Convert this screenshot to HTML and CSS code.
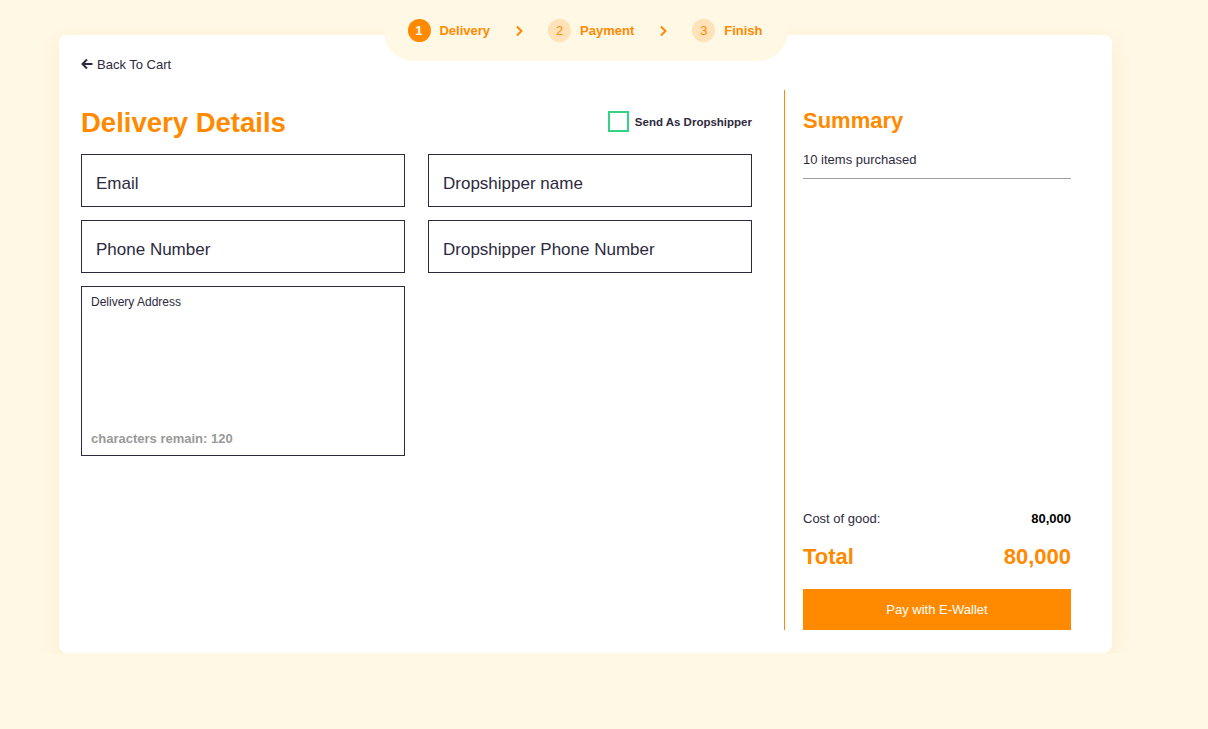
FILE: index.html
```html
<!DOCTYPE html>
<html lang="en">
<head>
<meta charset="utf-8">
<title>Checkout - Delivery</title>
<link rel="stylesheet" href="styles.css">
</head>
<body>
  <div class="card">
    <div class="steps">
      <div class="step active"><span class="num">1</span><span class="label">Delivery</span></div>
      <svg class="chev" width="8" height="12" viewBox="0 0 8 12"><polyline points="2,1.5 6.5,6 2,10.5" fill="none" stroke="#FF8A00" stroke-width="2"/></svg>
      <div class="step"><span class="num">2</span><span class="label">Payment</span></div>
      <svg class="chev" width="8" height="12" viewBox="0 0 8 12"><polyline points="2,1.5 6.5,6 2,10.5" fill="none" stroke="#FF8A00" stroke-width="2"/></svg>
      <div class="step"><span class="num">3</span><span class="label">Finish</span></div>
    </div>

    <a class="back" href="#">
      <svg width="12" height="12" viewBox="0 0 12 12"><path d="M11.5 6H1.5M6 1.5L1.5 6L6 10.5" fill="none" stroke="#2D2A40" stroke-width="2"/></svg>
      Back To Cart
    </a>

    <div class="main">
      <div class="delivery">
        <div class="head">
          <h1>Delivery Details</h1>
          <label class="check"><span class="box"></span>Send As Dropshipper</label>
        </div>
        <div class="form">
          <input type="text" placeholder="Email">
          <input type="text" placeholder="Dropshipper name">
          <input type="text" placeholder="Phone Number">
          <input type="text" placeholder="Dropshipper Phone Number">
          <div class="address">
            <textarea placeholder="Delivery Address"></textarea>
            <div class="remain">characters remain: 120</div>
          </div>
        </div>
      </div>

      <div class="summary">
        <h2>Summary</h2>
        <div class="items">10 items purchased</div>
        <hr>
        <div class="spacer"></div>
        <div class="line"><span>Cost of good:</span><b>80,000</b></div>
        <div class="line total"><span>Total</span><span>80,000</span></div>
        <button class="pay">Pay with E-Wallet</button>
      </div>
    </div>
  </div>
</body>
</html>
```

FILE: styles.css
```css
* {
  margin: 0;
  padding: 0;
  box-sizing: border-box;
}
body {
  font-family: "Liberation Sans", Arial, sans-serif;
  background-color: #FFF8E5;
  color: #2D2A40;
}

.card {
  position: relative;
  width: 1053px;
  margin: 35px 0 0 59px;
  padding: 21px 41px 23px 22px;
  background-color: #fff;
  border-radius: 8px;
  box-shadow: 0 6px 20px rgba(255, 138, 0, 0.12);
}

/* stepper sits over the top edge of the card */
.steps {
  position: absolute;
  top: -35px;
  left: 50%;
  transform: translateX(-50%);
  height: 61px;
  padding: 0 25px 0 24px;
  display: flex;
  align-items: center;
  background-color: #FFF8E5;
  border-radius: 0 0 30px 30px;
}
.step {
  display: flex;
  align-items: center;
  gap: 9px;
  color: #FF8A00;
  font-size: 13px;
  font-weight: bold;
}
.num {
  width: 23px;
  height: 23px;
  border-radius: 50%;
  background-color: rgba(255, 138, 0, 0.2);
  display: flex;
  justify-content: center;
  align-items: center;
  font-size: 13px;
  font-weight: normal;
}
.step.active .num {
  background-color: #FF8A00;
  color: #fff;
  font-weight: bold;
}
.chev {
  margin: 0 25px;
}

.back {
  display: flex;
  align-items: center;
  gap: 4px;
  height: 16px;
  font-size: 13px;
  color: #2D2A40;
  text-decoration: none;
}

.main {
  display: flex;
  margin-top: 18px;
  height: 540px;
}
.delivery {
  width: 671px;
}
.head {
  display: flex;
  justify-content: space-between;
  align-items: center;
  margin-top: 17px;
  height: 32px;
}
h1 {
  font-size: 27.5px;
  line-height: 32px;
  color: #FF8A00;
}
.check {
  display: flex;
  align-items: center;
  gap: 6px;
  font-size: 11.5px;
  font-weight: bold;
  margin-top: -3px;
}
.box {
  width: 21px;
  height: 21px;
  border: 2px solid #33D286;
}

.form {
  display: grid;
  grid-template-columns: 324px 324px;
  column-gap: 23px;
  row-gap: 13px;
  margin-top: 15px;
}
input {
  height: 53px;
  border: 1px solid #2D2A40;
  padding: 6px 14px 0;
  font-family: inherit;
  font-size: 17px;
  color: #2D2A40;
  outline: none;
}
input::placeholder,
textarea::placeholder {
  color: #2D2A40;
  opacity: 1;
}
.address {
  height: 170px;
  border: 1px solid #2D2A40;
  display: flex;
  flex-direction: column;
  padding: 8px 9px 9px;
}
textarea {
  flex: 1;
  border: none;
  resize: none;
  outline: none;
  font-family: inherit;
  font-size: 12px;
  color: #2D2A40;
}
.remain {
  font-size: 13px;
  font-weight: bold;
  color: #999;
}

.summary {
  margin-left: 32px;
  padding-left: 18px;
  border-left: 1px solid #FF8A00;
  width: 287px;
  display: flex;
  flex-direction: column;
}
h2 {
  margin-top: 18px;
  font-size: 22px;
  line-height: 26px;
  color: #FF8A00;
}
.items {
  margin-top: 18px;
  font-size: 13px;
  line-height: 16px;
}
hr {
  margin-top: 10px;
  border: none;
  border-top: 1px solid #9E9E9E;
}
.spacer {
  flex: 1;
}
.line {
  display: flex;
  justify-content: space-between;
  align-items: center;
  font-size: 13px;
  line-height: 16px;
}
.line b {
  color: #000;
}
.total {
  margin-top: 17px;
  font-size: 22px;
  line-height: 26px;
  font-weight: bold;
  color: #FF8A00;
}
.pay {
  margin-top: 19px;
  height: 41px;
  border: none;
  background-color: #FF8A00;
  color: #fff;
  font-family: inherit;
  font-size: 13px;
}
```
